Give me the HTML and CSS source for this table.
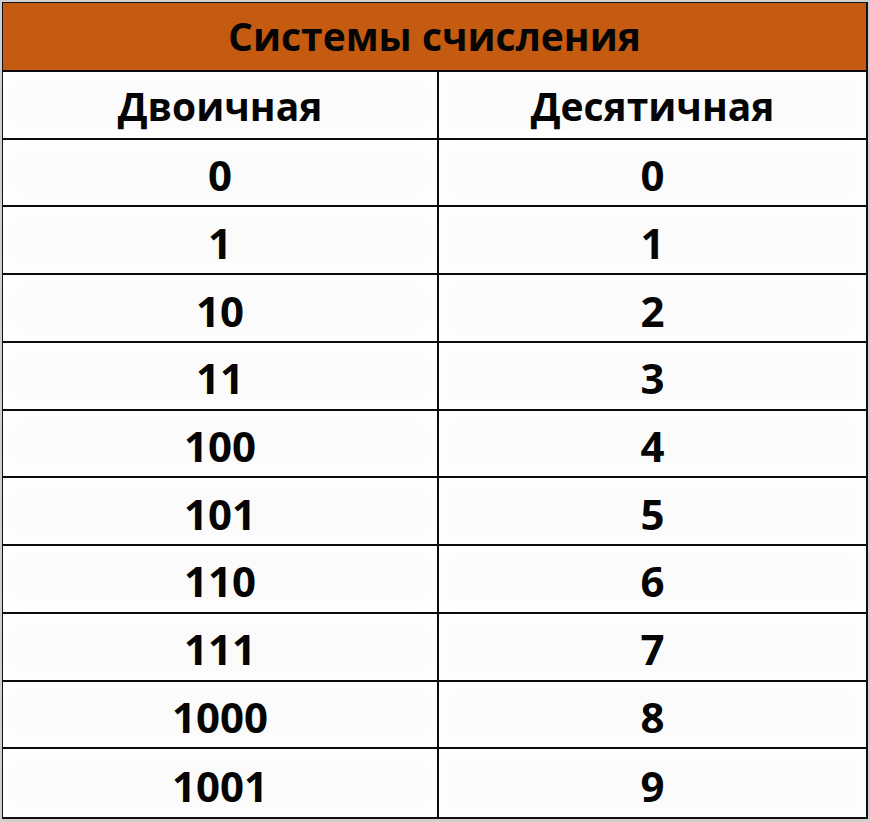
FILE: index.html
```html
<!DOCTYPE html>
<html lang="ru">
<head>
<meta charset="utf-8">
<title>Системы счисления</title>
<link rel="stylesheet" href="styles.css">
</head>
<body>
<div class="table">
  <div class="title">Системы счисления</div>
  <div class="row head"><div class="cell">Двоичная</div><div class="cell">Десятичная</div></div>
  <div class="row"><div class="cell">0</div><div class="cell">0</div></div>
  <div class="row"><div class="cell">1</div><div class="cell">1</div></div>
  <div class="row"><div class="cell">10</div><div class="cell">2</div></div>
  <div class="row"><div class="cell">11</div><div class="cell">3</div></div>
  <div class="row"><div class="cell">100</div><div class="cell">4</div></div>
  <div class="row"><div class="cell">101</div><div class="cell">5</div></div>
  <div class="row"><div class="cell">110</div><div class="cell">6</div></div>
  <div class="row"><div class="cell">111</div><div class="cell">7</div></div>
  <div class="row"><div class="cell">1000</div><div class="cell">8</div></div>
  <div class="row"><div class="cell">1001</div><div class="cell">9</div></div>
</div>
</body>
</html>
```
FILE: styles.css
```css
html, body {
  margin: 0;
  padding: 0;
  background: #cfcfcf;
}
body {
  width: 870px;
  height: 822px;
  padding: 2px 2px 0 2px;
  box-sizing: border-box;
  font-family: "Open Sans", "Liberation Sans", sans-serif;
  font-weight: 700;
  color: #050505;
}
.table {
  width: 866px;
  height: 817px;
  box-sizing: border-box;
  border: 1px solid #111;
  border-right-width: 2px;
  border-bottom-width: 2px;
  background: #fff;
  display: grid;
  grid-template-rows: 69px repeat(11, 1fr);
}
.title {
  background: #c55a11;
  display: flex;
  align-items: center;
  justify-content: center;
  font-size: 39px;
  border-bottom: 2px solid #0a0a0a;
  padding-bottom: 2px;
  box-sizing: border-box;
}
.row {
  display: grid;
  grid-template-columns: 436px 1fr;
  border-bottom: 2px solid #0a0a0a;
}
.row:last-child {
  border-bottom: none;
}
.cell {
  display: flex;
  align-items: center;
  justify-content: center;
  font-size: 42px;
  padding-top: 4px;
  background: #fbfbfb;
  box-shadow: inset 0 0 14px 8px #fff;
}
.cell:first-child {
  border-right: 2px solid #0a0a0a;
}
.head .cell {
  font-size: 39px;
  padding-top: 2px;
}
```
